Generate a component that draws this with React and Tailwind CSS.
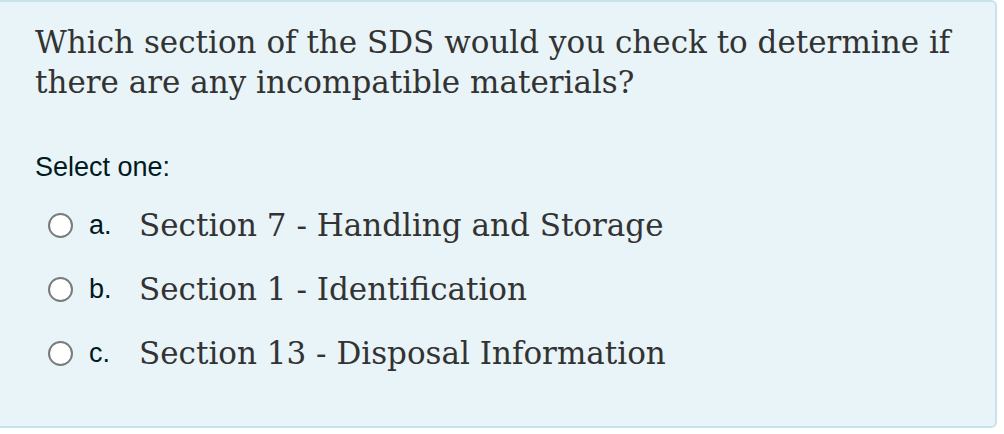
export default function App() {
  const options = [
    { letter: 'a.', text: 'Section 7 - Handling and Storage' },
    { letter: 'b.', text: 'Section 1 - Identification' },
    { letter: 'c.', text: 'Section 13 - Disposal Information' },
  ];

  return (
    <div className="w-[1004px] h-[434px] bg-white">
      <div className="w-[997px] h-[428px] bg-[#e8f4f7] border-2 border-l-0 border-[#c7e3ea] rounded-r-md pl-[35px] pt-[20px]">
        <h1
          className="text-[31px] leading-[40px] text-[#333333] pr-8"
          style={{ fontFamily: '"DejaVu Serif", "Liberation Serif", serif' }}
        >
          Which section of the SDS would you check to determine if there are any incompatible materials?
        </h1>
        <div
          className="mt-[49px] text-[27px] leading-8 text-[#001a1e]"
          style={{ fontFamily: '"Liberation Sans", Arial, sans-serif' }}
        >
          Select one:
        </div>
        <div className="mt-[22px] flex flex-col gap-[24px] pl-[13px]">
          {options.map((o) => (
            <label key={o.letter} className="flex items-center h-10">
              <span className="w-[25px] h-[25px] rounded-full border-2 border-[#7a7a7a] bg-white shrink-0" />
              <span
                className="ml-[16px] w-[50px] text-[27px] text-[#001a1e]"
                style={{ fontFamily: '"Liberation Sans", Arial, sans-serif' }}
              >
                {o.letter}
              </span>
              <span
                className="text-[31px] leading-10 text-[#333333]"
                style={{ fontFamily: '"DejaVu Serif", "Liberation Serif", serif' }}
              >
                {o.text}
              </span>
            </label>
          ))}
        </div>
      </div>
    </div>
  );
}
